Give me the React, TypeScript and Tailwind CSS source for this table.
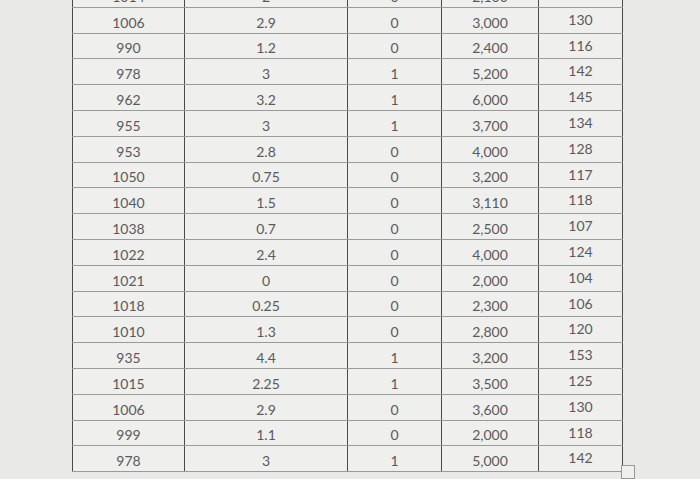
const rows: [string, string, string, string, string][] = [
  ['1014', '2', '0', '2,100', '121'],
  ['1006', '2.9', '0', '3,000', '130'],
  ['990', '1.2', '0', '2,400', '116'],
  ['978', '3', '1', '5,200', '142'],
  ['962', '3.2', '1', '6,000', '145'],
  ['955', '3', '1', '3,700', '134'],
  ['953', '2.8', '0', '4,000', '128'],
  ['1050', '0.75', '0', '3,200', '117'],
  ['1040', '1.5', '0', '3,110', '118'],
  ['1038', '0.7', '0', '2,500', '107'],
  ['1022', '2.4', '0', '4,000', '124'],
  ['1021', '0', '0', '2,000', '104'],
  ['1018', '0.25', '0', '2,300', '106'],
  ['1010', '1.3', '0', '2,800', '120'],
  ['935', '4.4', '1', '3,200', '153'],
  ['1015', '2.25', '1', '3,500', '125'],
  ['1006', '2.9', '0', '3,600', '130'],
  ['999', '1.1', '0', '2,000', '118'],
  ['978', '3', '1', '5,000', '142'],
];

const widths = ['w-[112px]', 'w-[163px]', 'w-[94px]', 'w-[97px]', 'w-[84px]'];

export default function App() {
  return (
    <div className="h-[479px] w-[700px] overflow-hidden bg-[#e9e9e8] font-['Lato','Open_Sans',sans-serif] text-[14px] text-[#5a5a5a]">
      <div className="pl-[72px]">
        <div className="relative inline-block -mt-[19px]">
          <table className="border-collapse bg-[#efefee]">
            <tbody>
              {rows.map((r, i) => (
                <tr key={i} className="h-[25.8px]">
                  {r.map((c, j) => (
                    <td
                      key={j}
                      className={`${widths[j]} border-y border-y-[#9a9a9a] border-x border-x-[#4a4a4a] text-center leading-none ${j === 4 ? 'align-top pt-[5px]' : 'pt-[5px]'}`}
                    >
                      {c}
                    </td>
                  ))}
                </tr>
              ))}
            </tbody>
          </table>
          <div className="absolute -bottom-[7px] -right-[12px] h-[14px] w-[14px] border border-[#9a9a9a] bg-[#efefee]" />
        </div>
      </div>
    </div>
  );
}
